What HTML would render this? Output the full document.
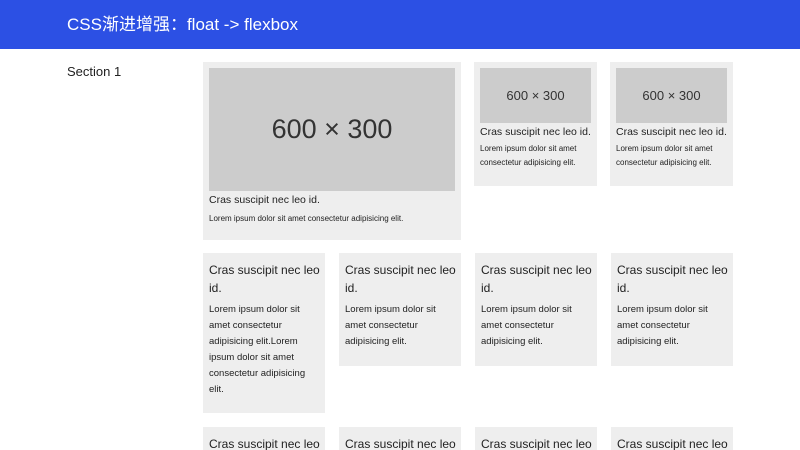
<!DOCTYPE html>
<html><head><meta charset="utf-8"><style>
*{margin:0;padding:0;box-sizing:border-box}
html,body{width:800px;height:450px;overflow:hidden}
body{background:#fff;font-family:"Liberation Sans","Noto Sans CJK SC",sans-serif;color:#222;position:relative}
.hd{position:absolute;left:0;top:0;width:800px;height:49px;background:#2c50e4;color:#fff;font-size:17px;line-height:49px;padding-left:67px}
.sec{position:absolute;left:67px;top:64px;font-size:13px}
.c{position:absolute;background:#eee;padding:6px;overflow:hidden}
.img{background:#ccc;display:flex;align-items:center;justify-content:center;color:#333;font-weight:300}
.t{font-size:10.5px;line-height:16px;margin-top:1px;white-space:nowrap}
.p{font-size:8px;line-height:14px;margin-top:4px}
.r .t{font-size:12px;line-height:18px;margin-top:2px}
.r .p{font-size:9.5px;line-height:16px;margin-top:5px;white-space:nowrap}
</style></head><body>
<div class="hd">CSS渐进增强：float -&gt; flexbox</div>
<div class="sec">Section 1</div>
<div class="c" style="left:203px;top:62px;width:258px;height:178px"><div class="img" style="height:123px;font-size:27px">600 × 300</div><div class="t">Cras suscipit nec leo id.</div><div class="p">Lorem ipsum dolor sit amet consectetur adipisicing elit.</div></div>
<div class="c" style="left:474px;top:62px;width:123px;height:124px"><div class="img" style="height:55px;font-size:13px">600 × 300</div><div class="t">Cras suscipit nec leo id.</div><div class="p" style="margin-top:2px">Lorem ipsum dolor sit amet consectetur adipisicing elit.</div></div>
<div class="c" style="left:610px;top:62px;width:123px;height:124px"><div class="img" style="height:55px;font-size:13px">600 × 300</div><div class="t">Cras suscipit nec leo id.</div><div class="p" style="margin-top:2px">Lorem ipsum dolor sit amet consectetur adipisicing elit.</div></div>
<div class="c r" style="left:203px;top:253px;width:122px;height:160px"><div class="t">Cras suscipit nec leo<br>id.</div><div class="p">Lorem ipsum dolor sit<br>amet consectetur<br>adipisicing elit.Lorem<br>ipsum dolor sit amet<br>consectetur adipisicing<br>elit.</div></div>
<div class="c r" style="left:339px;top:253px;width:122px;height:113px"><div class="t">Cras suscipit nec leo<br>id.</div><div class="p">Lorem ipsum dolor sit<br>amet consectetur<br>adipisicing elit.</div></div>
<div class="c r" style="left:475px;top:253px;width:122px;height:113px"><div class="t">Cras suscipit nec leo<br>id.</div><div class="p">Lorem ipsum dolor sit<br>amet consectetur<br>adipisicing elit.</div></div>
<div class="c r" style="left:611px;top:253px;width:122px;height:113px"><div class="t">Cras suscipit nec leo<br>id.</div><div class="p">Lorem ipsum dolor sit<br>amet consectetur<br>adipisicing elit.</div></div>
<div class="c r" style="left:203px;top:427px;width:122px;height:23px"><div class="t">Cras suscipit nec leo</div></div>
<div class="c r" style="left:339px;top:427px;width:122px;height:23px"><div class="t">Cras suscipit nec leo</div></div>
<div class="c r" style="left:475px;top:427px;width:122px;height:23px"><div class="t">Cras suscipit nec leo</div></div>
<div class="c r" style="left:611px;top:427px;width:122px;height:23px"><div class="t">Cras suscipit nec leo</div></div>
</body></html>
